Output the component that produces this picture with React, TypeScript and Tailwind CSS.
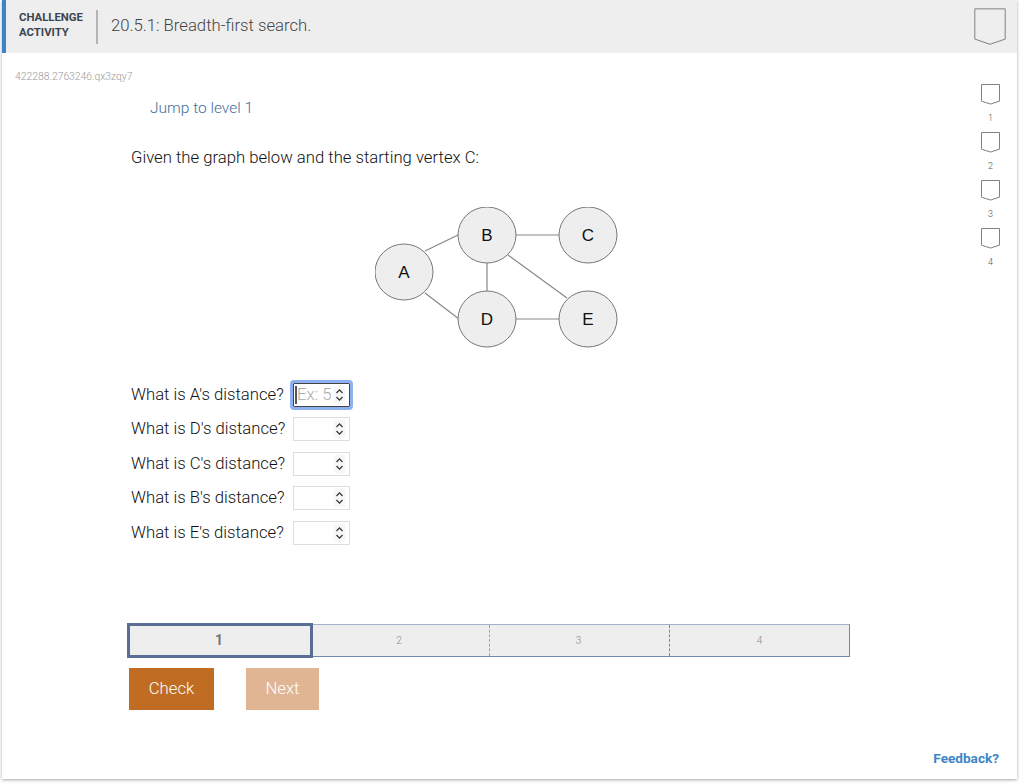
const Shield = ({ className }: { className: string }) => (
  <svg className={className} viewBox="0 0 20 22" fill="none" preserveAspectRatio="none">
    <path d="M0.5 0.5H19.5V18L10 21L0.5 18Z" stroke="#808080" strokeWidth="1" vectorEffect="non-scaling-stroke" />
  </svg>
);

const Spinner = () => (
  <svg className="w-[13px] h-[20px] shrink-0" viewBox="0 0 13 20" fill="none">
    <rect x="0.5" y="0.5" width="12" height="19" rx="4" fill="#f7f7f7" />
    <path d="M3.5 8L6.5 4.8L9.5 8" stroke="#333" strokeWidth="1.2" />
    <path d="M3.5 12L6.5 15.2L9.5 12" stroke="#333" strokeWidth="1.2" />
  </svg>
);

const Graph = () => {
  const nodes = [
    { n: "A", x: 29, y: 65 },
    { n: "B", x: 112, y: 28 },
    { n: "C", x: 213, y: 28 },
    { n: "D", x: 112, y: 112 },
    { n: "E", x: 213, y: 112 },
  ];
  return (
    <svg width="244" height="142" viewBox="0 0 244 142" className="block">
      <g stroke="#888" strokeWidth="1.2">
        <line x1="50" y1="44" x2="83" y2="28" />
        <line x1="50" y1="86" x2="84" y2="112" />
        <line x1="112" y1="28" x2="213" y2="28" />
        <line x1="112" y1="28" x2="112" y2="112" />
        <line x1="133" y1="48" x2="192" y2="91" />
        <line x1="112" y1="112" x2="213" y2="112" />
      </g>
      {nodes.map((p) => (
        <g key={p.n}>
          <ellipse cx={p.x} cy={p.y} rx="29" ry="28" fill="#eeeeee" stroke="#777" strokeWidth="1" />
          <text x={p.x} y={p.y + 6} textAnchor="middle" fontSize="17" fill="#111" fontFamily="Liberation Sans, sans-serif">{p.n}</text>
        </g>
      ))}
    </svg>
  );
};

const questions = [
  { label: "What is A's distance?", h: "h-[34px]", focus: true },
  { label: "What is D's distance?", h: "h-[34px]", focus: false },
  { label: "What is C's distance?", h: "h-[35px]", focus: false },
  { label: "What is B's distance?", h: "h-[34px]", focus: false },
  { label: "What is E's distance?", h: "h-[35px]", focus: false },
];

const App = () => {
  return (
    <div className="w-[1024px] h-[784px] bg-white font-['Roboto',sans-serif] overflow-hidden antialiased">
      <div className="ml-[2px] w-[1015px] h-[779px] bg-white shadow-[0_1px_3px_rgba(0,0,0,0.35)] flex flex-col">
        {/* header */}
        <div className="h-[53px] shrink-0 bg-[#eeeeee] border-l-[4px] border-[#3d85c6] flex items-center pl-[13px] pr-[11px]">
          <div className="w-[77px] -mt-[3px] text-[11.35px] leading-[15px] font-bold text-[#3c4650]">
            CHALLENGE<br />ACTIVITY
          </div>
          <div className="w-[2px] h-[34px] bg-[#b4b4b4]" />
          <h1 className="ml-[13px] -mt-[2px] text-[16.7px] font-light text-[#444] flex-1">20.5.1: Breadth-first search.</h1>
          <Shield className="w-[32px] h-[38px]" />
        </div>

        <div className="flex flex-1">
          {/* main column */}
          <div className="flex-1 flex flex-col">
            <div className="ml-[13px] mt-[18px] text-[10.35px] leading-[12px] font-light text-[#999]">422288.2763246.qx3zqy7</div>
            <div className="ml-[148px] mt-[15px] text-[15.5px] leading-[20px] font-light text-[#3f6d9e]">Jump to level 1</div>

            <p className="ml-[129px] mt-[30px] text-[16.7px] leading-[20px] font-light text-[#111]">Given the graph below and the starting vertex C:</p>

            <div className="ml-[373px] mt-[39px]">
              <Graph />
            </div>

            <div className="ml-[129px] mt-[29px] flex flex-col">
              {questions.map((q) => (
                <div key={q.label} className={`flex items-center ${q.h}`}>
                  <span className="w-[162px] text-[16.7px] font-light text-[#111] whitespace-nowrap">{q.label}</span>
                  {q.focus ? (
                    <div className="w-[57px] h-[24px] flex items-center bg-white border border-[#444] outline-[3px] outline-[#8fb0f0] rounded-[1px] pl-[1px] pr-[3px]">
                      <div className="w-[2px] h-[18px] bg-[#555] shrink-0" />
                      <input placeholder="Ex: 5" readOnly className="w-full min-w-0 text-[16.7px] font-light placeholder:text-[#aaa] outline-none" />
                      <Spinner />
                    </div>
                  ) : (
                    <div className="w-[57px] h-[24px] flex items-center justify-end bg-white border border-[#ddd] pr-[3px]">
                      <Spinner />
                    </div>
                  )}
                </div>
              ))}
            </div>

            {/* level bar */}
            <div className="ml-[125px] mt-[74px] w-[723px] flex h-[33px] items-stretch border border-[#6f88ab] border-t-[#9fb2ca] bg-[#eeeeee]">
              <div className="w-[186px] -my-[2px] -ml-[1px] pr-[2px] border-[3px] border-[#5a6e93] bg-[#eeeeee] flex items-center justify-center text-[14px] font-bold text-[#777]">1</div>
              <div className="w-[177px] pr-[4px] border-r border-dashed border-[#8fa5c0] flex items-center justify-center text-[10px] font-light text-[#888]">2</div>
              <div className="w-[180px] pr-[2px] border-r border-dashed border-[#6f88ab] flex items-center justify-center text-[10px] font-light text-[#888]">3</div>
              <div className="flex-1 flex items-center justify-center text-[10px] font-light text-[#888]">4</div>
            </div>

            <div className="ml-[127px] mt-[11px] flex gap-[32px]">
              <button className="w-[85px] h-[42px] bg-[#c06c23] text-white text-[16.7px] font-light">Check</button>
              <button className="w-[73px] h-[42px] bg-[#e0b594] text-white text-[16.7px] font-light">Next</button>
            </div>
          </div>

          {/* level badges */}
          <div className="w-[53px] shrink-0 flex flex-col items-center pt-[31px]">
            {[1, 2, 3, 4].map((n) => (
              <div key={n} className="h-[48px] flex flex-col items-center">
                <Shield className="w-[19px] h-[21px]" />
                <span className="mt-[8px] text-[9px] leading-[11px] font-light text-[#555]">{n}</span>
              </div>
            ))}
          </div>
        </div>

        <div className="h-[29px] shrink-0 flex justify-end pr-[18px] -mt-[29px]">
          <a className="text-[13.6px] leading-[16px] font-bold text-[#3d85c6]">Feedback?</a>
        </div>
      </div>
    </div>
  );
};

export default App;
